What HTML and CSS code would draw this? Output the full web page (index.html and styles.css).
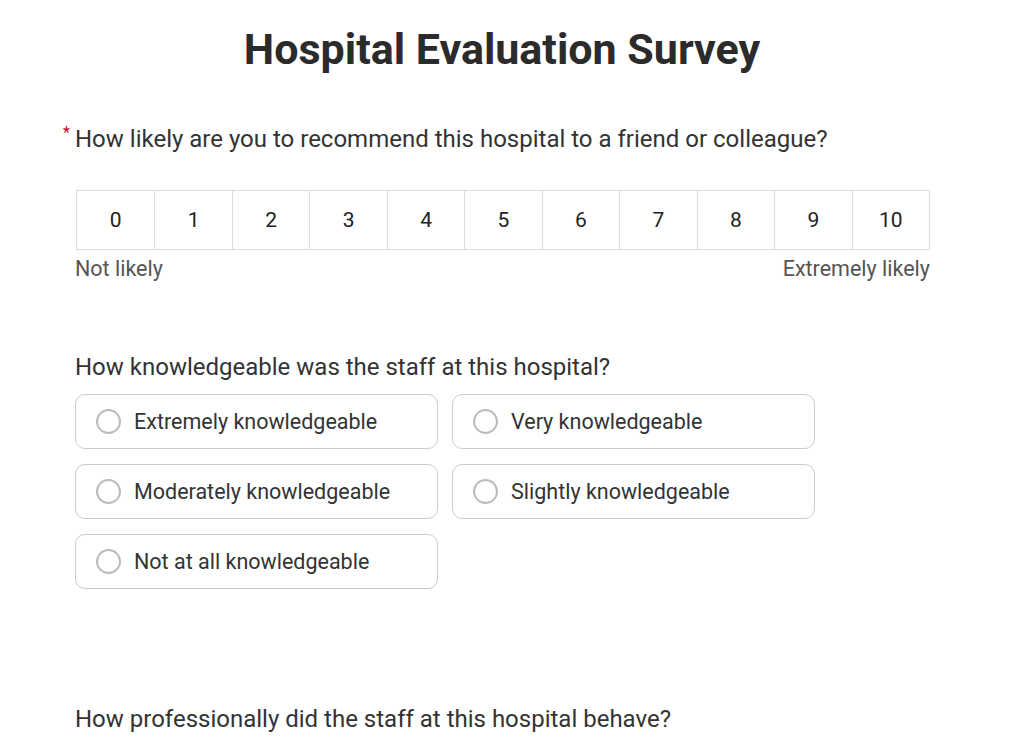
FILE: index.html
```html
<!DOCTYPE html>
<html lang="en">
<head>
    <meta charset="UTF-8">
    <meta name="viewport" content="width=device-width, initial-scale=1.0">
    <title>Hospital Evaluation Survey</title>
    <link rel="stylesheet" href="styles.css">
</head>
<body>
    <div class="survey">
        <h1 class="title">Hospital Evaluation Survey</h1>

        <div class="question q-nps">
            <p class="question-text"><span class="required">*</span>How likely are you to recommend this hospital to a friend or colleague?</p>
            <div class="scale">
                <button>0</button>
                <button>1</button>
                <button>2</button>
                <button>3</button>
                <button>4</button>
                <button>5</button>
                <button>6</button>
                <button>7</button>
                <button>8</button>
                <button>9</button>
                <button>10</button>
            </div>
            <div class="scale-labels">
                <span>Not likely</span>
                <span>Extremely likely</span>
            </div>
        </div>

        <div class="question q-choice">
            <p class="question-text">How knowledgeable was the staff at this hospital?</p>
            <div class="options">
                <label class="option"><span class="radio"></span>Extremely knowledgeable</label>
                <label class="option"><span class="radio"></span>Very knowledgeable</label>
                <label class="option"><span class="radio"></span>Moderately knowledgeable</label>
                <label class="option"><span class="radio"></span>Slightly knowledgeable</label>
                <label class="option"><span class="radio"></span>Not at all knowledgeable</label>
            </div>
        </div>

        <div class="question q-last">
            <p class="question-text">How professionally did the staff at this hospital behave?</p>
        </div>
    </div>
</body>
</html>
```

FILE: styles.css
```css
* {
    margin: 0;
    padding: 0;
    box-sizing: border-box;
}

body {
    font-family: 'Roboto', 'Liberation Sans', sans-serif;
    background-color: #fff;
    color: #333;
}

.survey {
    width: 1024px;
    padding: 0 95px 0 75px;
}

.title {
    font-size: 43px;
    font-weight: 700;
    color: #2b2b2b;
    text-align: center;
    padding-top: 24px;
    line-height: 50px;
}

.question-text {
    font-size: 24px;
    line-height: 30px;
    color: #333;
    position: relative;
}

.required {
    position: absolute;
    left: -12px;
    top: -6px;
    color: #d0021b;
    font-size: 16px;
}

.q-nps {
    margin-top: 50px;
}

.scale {
    display: grid;
    grid-template-columns: repeat(11, 1fr);
    width: 854px;
    margin-top: 36px;
    margin-left: 1px;
    border: 1px solid #ddd;
}

.scale button {
    height: 58px;
    border: none;
    border-left: 1px solid #ddd;
    background-color: #fff;
    font-family: inherit;
    font-size: 21px;
    color: #222;
}

.scale button:first-child {
    border-left: none;
}

.scale-labels {
    display: flex;
    justify-content: space-between;
    width: 855px;
    margin-top: 7px;
    font-size: 21.5px;
    line-height: 24px;
    color: #555;
}

.q-choice {
    margin-top: 71px;
}

.options {
    display: grid;
    grid-template-columns: 363px 363px;
    column-gap: 14px;
    row-gap: 15px;
    margin-top: 12px;
}

.option {
    display: flex;
    align-items: center;
    height: 55px;
    padding-left: 20px;
    border: 1px solid #ccc;
    border-radius: 10px;
    font-size: 21.5px;
    color: #333;
}

.radio {
    width: 25px;
    height: 25px;
    border: 2px solid #bbb;
    border-radius: 50%;
    margin-right: 13px;
}

.q-last {
    margin-top: 115px;
}
```
